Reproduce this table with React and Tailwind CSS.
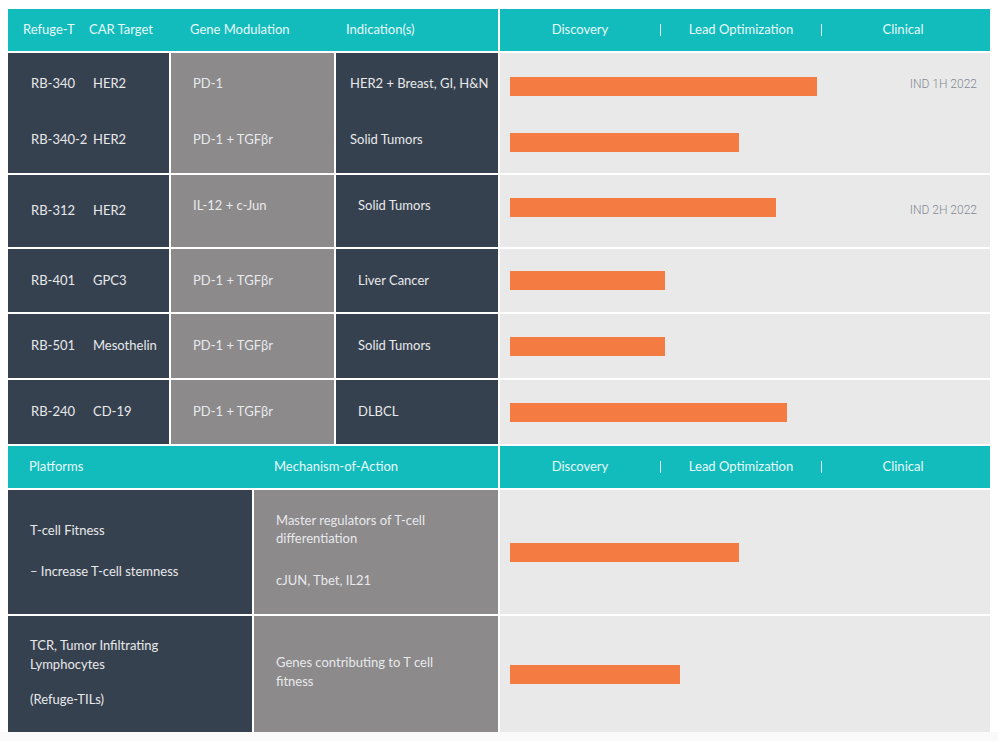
import React from "react";

const FONT = { fontFamily: "Lato, 'Open Sans', sans-serif" };

const products = [
  { group: [
    { id: "RB-340", target: "HER2", gene: "PD-1", ind: "HER2 + Breast, GI, H&N", bar: 307, note: "IND 1H 2022" },
    { id: "RB-340-2", target: "HER2", gene: "PD-1 + TGFβr", ind: "Solid Tumors", bar: 229 },
  ] },
];

const rows = [
  { id: "RB-312", target: "HER2", gene: "IL-12 + c-Jun", ind: "Solid Tumors", bar: 266, note: "IND 2H 2022", h: "h-[72px]", top: true },
  { id: "RB-401", target: "GPC3", gene: "PD-1 + TGFβr", ind: "Liver Cancer", bar: 155, h: "h-[63px]" },
  { id: "RB-501", target: "Mesothelin", gene: "PD-1 + TGFβr", ind: "Solid Tumors", bar: 155, h: "h-[64px]" },
  { id: "RB-240", target: "CD-19", gene: "PD-1 + TGFβr", ind: "DLBCL", bar: 277, h: "h-[64px]" },
];

const Bar = ({ w }) => (
  <div className="h-[19px] bg-[#f47b42]" style={{ width: w }} />
);

const StageHeader = () => (
  <div className="flex-1 bg-[#13bcbc] flex items-center text-[13px] text-[#e6f8f8]">
    <div className="w-[160px] text-center">Discovery</div>
    <div className="w-px h-[12px] bg-[#e6f8f8]" />
    <div className="w-[160px] text-center">Lead Optimization</div>
    <div className="w-px h-[12px] bg-[#e6f8f8]" />
    <div className="flex-1 text-center pr-[6px]">Clinical</div>
  </div>
);

const Note = ({ children, className = "" }) => (
  <span
    className={`absolute right-[13px] text-[12px] font-light text-[#858a94] ${className}`}
    style={{ fontFamily: "Roboto, sans-serif" }}
  >
    {children}
  </span>
);

export default function App() {
  return (
    <div className="bg-white text-[13px] text-[#e8e9eb]" style={FONT}>
      <div className="pt-[9px] px-[8px] flex flex-col gap-[2px] w-[998px]">
        {/* header */}
        <div className="flex gap-[2px] h-[42px]">
          <div className="w-[490px] bg-[#13bcbc] flex items-center text-[#e6f8f8]">
            <span className="ml-[15px] w-[66px]">Refuge-T</span>
            <span className="w-[101px]">CAR Target</span>
            <span className="w-[156px]">Gene Modulation</span>
            <span>Indication(s)</span>
          </div>
          <StageHeader />
        </div>

        {/* first paired row */}
        {products.map((p, i) => (
          <div key={i} className="flex gap-[2px] h-[120px]">
            <div className="w-[161px] bg-[#36414f] pt-[3px]">
              {p.group.map((r) => (
                <div key={r.id} className="h-[56px] flex items-center">
                  <span className="ml-[23px] w-[62px]">{r.id}</span>
                  <span>{r.target}</span>
                </div>
              ))}
            </div>
            <div className="w-[163px] bg-[#8c8a8b] pt-[3px] pl-[22px]">
              {p.group.map((r) => (
                <div key={r.id} className="h-[56px] flex items-center">{r.gene}</div>
              ))}
            </div>
            <div className="w-[162px] bg-[#36414f] pt-[3px] pl-[14px]">
              {p.group.map((r) => (
                <div key={r.id} className="h-[56px] flex items-center">{r.ind}</div>
              ))}
            </div>
            <div className="flex-1 bg-[#e9e9e9] pt-[5px] pl-[10px]">
              {p.group.map((r) => (
                <div key={r.id} className="relative h-[56px] flex items-center">
                  <Bar w={r.bar} />
                  {r.note && <Note className="-mt-[4px]">{r.note}</Note>}
                </div>
              ))}
            </div>
          </div>
        ))}

        {rows.map((r) => (
          <div key={r.id} className={`flex gap-[2px] ${r.h}`}>
            <div className="w-[161px] bg-[#36414f] flex items-center">
              <span className="ml-[23px] w-[62px]">{r.id}</span>
              <span>{r.target}</span>
            </div>
            <div className={`w-[163px] bg-[#8c8a8b] pl-[22px] flex ${r.top ? "items-start pt-[21px]" : "items-center"}`}>
              {r.gene}
            </div>
            <div className={`w-[162px] bg-[#36414f] pl-[22px] flex ${r.top ? "items-start pt-[21px]" : "items-center"}`}>
              {r.ind}
            </div>
            <div className={`relative flex-1 bg-[#e9e9e9] pl-[10px] flex ${r.top ? "items-start pt-[23px]" : "items-center"}`}>
              <Bar w={r.bar} />
              {r.note && <Note className="top-[26px]">{r.note}</Note>}
            </div>
          </div>
        ))}

        {/* platforms header */}
        <div className="flex gap-[2px] h-[42px]">
          <div className="w-[490px] bg-[#13bcbc] flex items-center text-[#e6f8f8]">
            <span className="ml-[21px] w-[245px]">Platforms</span>
            <span>Mechanism-of-Action</span>
          </div>
          <StageHeader />
        </div>

        <div className="flex gap-[2px] h-[124px]">
          <div className="w-[244px] bg-[#36414f] pl-[22px] flex flex-col justify-center gap-[23px] leading-[18px] pb-[4px]">
            <p>T-cell Fitness</p>
            <p>– Increase T-cell stemness</p>
          </div>
          <div className="w-[244px] bg-[#8c8a8b] pl-[22px] pr-[20px] flex flex-col justify-center gap-[24px] leading-[18px] pb-[4px]">
            <p>Master regulators of T-cell differentiation</p>
            <p>cJUN, Tbet, IL21</p>
          </div>
          <div className="flex-1 bg-[#e9e9e9] pl-[10px] flex items-center">
            <Bar w={229} />
          </div>
        </div>

        <div className="flex gap-[2px] h-[116px]">
          <div className="w-[244px] bg-[#36414f] pl-[22px] pr-[30px] flex flex-col justify-center gap-[16px] leading-[19px] pb-[4px]">
            <p>TCR, Tumor Infiltrating Lymphocytes</p>
            <p>(Refuge-TILs)</p>
          </div>
          <div className="w-[244px] bg-[#8c8a8b] pl-[22px] pr-[50px] flex flex-col justify-center leading-[19px] pb-[4px]">
            <p>Genes contributing to T cell fitness</p>
          </div>
          <div className="flex-1 bg-[#e9e9e9] pl-[10px] flex items-center">
            <Bar w={170} />
          </div>
        </div>
      </div>
      <div className="h-[9px] bg-[#fafafa]" />
    </div>
  );
}
